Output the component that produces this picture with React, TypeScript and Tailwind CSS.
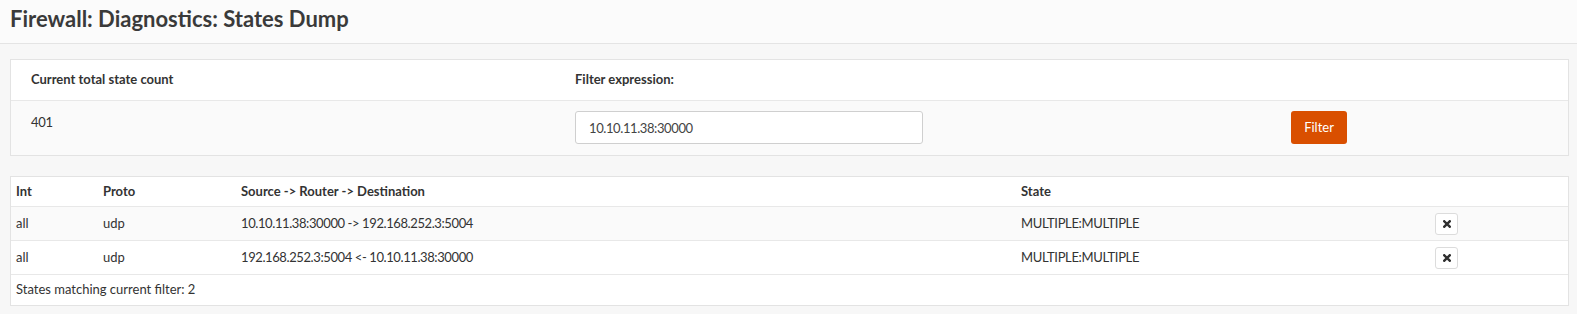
const rows = [
  { intf: "all", proto: "udp", path: "10.10.11.38:30000 -> 192.168.252.3:5004", state: "MULTIPLE:MULTIPLE" },
  { intf: "all", proto: "udp", path: "192.168.252.3:5004 <- 10.10.11.38:30000", state: "MULTIPLE:MULTIPLE" },
];

function TimesIcon() {
  return (
    <svg width="8" height="8" viewBox="0 0 10 10">
      <path d="M1.6 1.6 L8.4 8.4 M8.4 1.6 L1.6 8.4" stroke="#2f2f2f" strokeWidth="3" strokeLinecap="square" />
    </svg>
  );
}

export default function App() {
  return (
    <div className="min-h-[314px] bg-[#f7f7f7] text-[13px] text-[#333] font-['Lato','Liberation_Sans',sans-serif]">
      <header className="h-[44px] bg-[#fbfbfb] border-b border-[#e4e4e4] flex items-center pl-[10px]">
        <h1 className="text-[22px] font-bold text-[#3a3a3a] leading-none -mt-[6px]">Firewall: Diagnostics: States Dump</h1>
      </header>

      <div className="pl-[10px] pr-[8px] pt-[15px]">
        <section className="border border-[#e3e3e3] bg-white">
          <div className="grid grid-cols-[544px_716px_1fr] h-[41px] items-center border-b border-[#e8e8e8] pl-[20px] font-bold">
            <div>Current total state count</div>
            <div>Filter expression:</div>
            <div />
          </div>
          <div className="grid grid-cols-[544px_716px_1fr] h-[54px] bg-[#fafafa] pl-[20px] pt-[10px]">
            <div className="leading-[22px] tracking-[-0.3px]">401</div>
            <div>
              <input
                defaultValue="10.10.11.38:30000"
                className="w-[348px] h-[33px] bg-white border border-[#cfcfcf] rounded-[3px] px-[13px] text-[13px] tracking-[-0.4px] text-[#444] outline-none"
              />
            </div>
            <div>
              <button className="w-[56px] h-[33px] rounded-[3px] bg-[#d94f00] text-white text-[13px]">Filter</button>
            </div>
          </div>
        </section>

        <section className="mt-[20px] border border-[#e3e3e3] bg-white">
          <div className="grid grid-cols-[87px_138px_780px_414px_1fr] h-[30px] items-center border-b border-[#e8e8e8] pl-[5px] font-bold">
            <div>Int</div>
            <div>Proto</div>
            <div>Source -&gt; Router -&gt; Destination</div>
            <div>State</div>
            <div />
          </div>
          {rows.map((r, i) => (
            <div
              key={i}
              className={`grid grid-cols-[87px_138px_780px_414px_1fr] h-[34px] items-center border-b border-[#e8e8e8] pl-[5px] ${i === 0 ? "bg-[#fafafa]" : "bg-white"}`}
            >
              <div>{r.intf}</div>
              <div>{r.proto}</div>
              <div className="tracking-[-0.4px]">{r.path}</div>
              <div className="tracking-[-0.35px]">{r.state}</div>
              <div>
                <button className="w-[23px] h-[22px] flex items-center justify-center bg-white border border-[#dcdcdc] rounded-[3px]">
                  <TimesIcon />
                </button>
              </div>
            </div>
          ))}
          <div className="h-[30px] flex items-center pl-[5px]">States matching current filter: 2</div>
        </section>
      </div>
    </div>
  );
}
